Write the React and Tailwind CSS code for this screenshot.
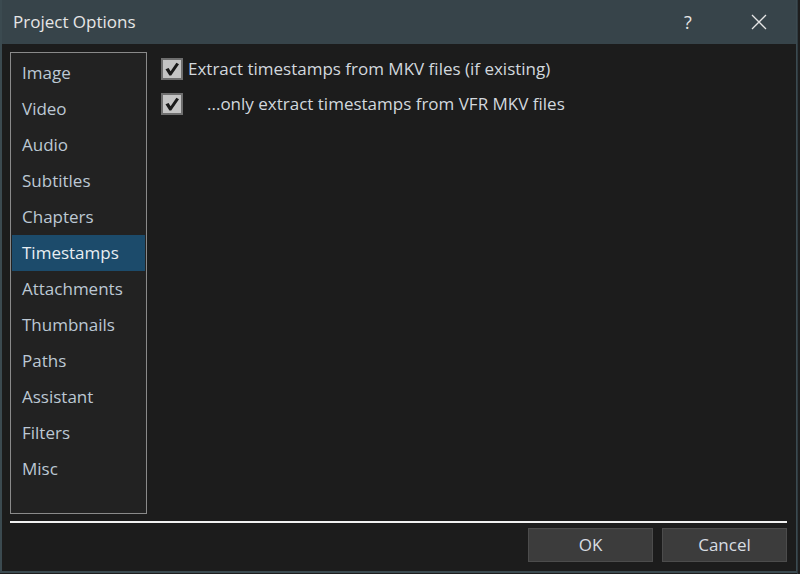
import React, { useState } from 'react';

const pages = [
  'Image',
  'Video',
  'Audio',
  'Subtitles',
  'Chapters',
  'Timestamps',
  'Attachments',
  'Thumbnails',
  'Paths',
  'Assistant',
  'Filters',
  'Misc',
];

const CheckBox = ({ checked }) => (
  <div className="w-[22px] h-[22px] shrink-0 bg-[#c4c4c4] border-2 border-[#6e6e6e] flex items-center justify-center">
    {checked && (
      <svg width="16" height="16" viewBox="0 0 16 16">
        <path d="M1.5 8.2 L4.6 7 L6.6 10.2 L12.4 1.8 L15 3.2 L7.2 14.6 L5.4 14.6 Z" fill="#1a1a1a" />
      </svg>
    )}
  </div>
);

const App = () => {
  const [active, setActive] = useState('Timestamps');
  const [extract, setExtract] = useState(true);
  const [vfrOnly, setVfrOnly] = useState(true);

  return (
    <div
      className="w-[800px] h-[574px] bg-[#1e1e1e] flex overflow-hidden"
      style={{ fontFamily: '"Open Sans", "Noto Sans", sans-serif' }}
    >
      <div className="w-[797px] h-[573px] shrink-0 flex flex-col bg-[#1c1c1c] border-l-2 border-r border-b-2 border-[#3b4a50]">
        {/* Title bar */}
        <div className="h-[44px] shrink-0 bg-[#37444a] flex items-center text-[#e6e6e6]">
          <div className="pl-[11px] text-[17px] flex-1">Project Options</div>
          <div className="w-[72px] text-center text-[18px]">?</div>
          <div className="w-[72px] flex items-center justify-center pr-[2px]">
            <svg width="16" height="16" viewBox="0 0 16 16">
              <path d="M1 1 L15 15 M15 1 L1 15" stroke="#e6e6e6" strokeWidth="1.3" />
            </svg>
          </div>
        </div>

        {/* Body */}
        <div className="flex-1 flex pt-[8px] px-[8px]">
          <div className="w-[137px] h-[462px] shrink-0 bg-[#222222] border border-[#8a8a8a] pt-[2px] px-[1px] flex flex-col">
            {pages.map((p) => (
              <div
                key={p}
                onClick={() => setActive(p)}
                className={`h-[36px] shrink-0 flex items-center pl-[10px] text-[17px] cursor-default ${
                  active === p ? 'bg-[#1c4b6b] text-[#e8eef2]' : 'text-[#bcc8d4]'
                }`}
              >
                {p}
              </div>
            ))}
          </div>

          <div className="flex-1 pl-[14px] pt-[6px] flex flex-col gap-[13px] text-[17px] text-[#d2d8de]">
            <label className="flex items-center gap-[5px] h-[22px]" onClick={() => setExtract(!extract)}>
              <CheckBox checked={extract} />
              <span>Extract timestamps from MKV files (if existing)</span>
            </label>
            <label className="flex items-center h-[22px]" onClick={() => setVfrOnly(!vfrOnly)}>
              <CheckBox checked={vfrOnly} />
              <span className="pl-[24px]">...only extract timestamps from VFR MKV files</span>
            </label>
          </div>
        </div>

        {/* Footer */}
        <div className="px-[8px]">
          <div className="h-[2px] bg-[#f0f0f0] mr-[1px]" />
        </div>
        <div className="h-[48px] shrink-0 flex justify-end items-start gap-[9px] pt-[5px] pr-[9px]">
          <button className="w-[125px] h-[34px] bg-[#3c3c3c] border border-[#4c4c4c] text-[#d8dde2] text-[17px]">
            OK
          </button>
          <button className="w-[125px] h-[34px] bg-[#3c3c3c] border border-[#4c4c4c] text-[#d8dde2] text-[17px]">
            Cancel
          </button>
        </div>
      </div>
      <div className="flex-1 bg-[#1e1e1e] border-l border-[#2f3a40]" />
    </div>
  );
};

export default App;
